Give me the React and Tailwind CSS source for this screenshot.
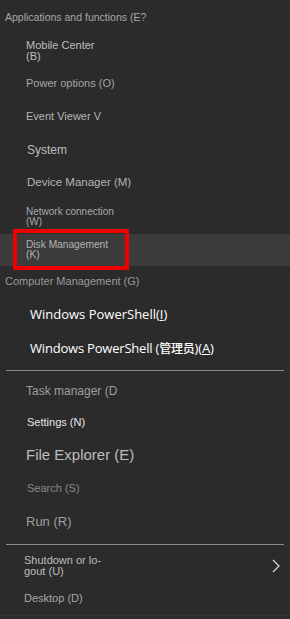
export default function App() {
  const sans = { fontFamily: '"Liberation Sans", Arial, sans-serif' };
  return (
    <div className="w-[290px] h-[619px] bg-[#2b2b2b] flex flex-col overflow-hidden" style={sans}>
      <div className="h-[35px] flex items-center pl-[5px] text-[10.5px] text-[#a8a8a8]">Applications and functions (E?</div>
      <div className="h-[32px] flex items-center pl-[26px]">
        <div className="text-[11px] leading-[11px] text-[#bdbdbd]">Mobile Center<br />(B)</div>
      </div>
      <div className="h-[33px] flex items-center pl-[26px] text-[11px] text-[#a6a6a6]">Power options (O)</div>
      <div className="h-[33px] flex items-center pl-[26px] text-[11px] text-[#b3b3b3]">Event Viewer V</div>
      <div className="h-[33px] flex items-center pl-[27px] text-[12px] text-[#bdbdbd]">System</div>
      <div className="h-[33px] flex items-center pl-[27px] text-[11.5px] text-[#b3b3b3]">Device Manager (M)</div>
      <div className="h-[35px] flex items-center pl-[26px]">
        <div className="text-[10px] leading-[10px] text-[#a8a8a8]">Network connection<br />(W)</div>
      </div>
      <div className="h-[32px] bg-[#3b3b3b] relative flex items-center pl-[26px]">
        <div className="text-[10.2px] leading-[10px] text-[#b3b3b3]">Disk Management<br />(K)</div>
        <div className="absolute left-[13px] top-[-5px] w-[116px] h-[41px] border-[4px] border-[#ee0000]"></div>
      </div>
      <div className="h-[31px] flex items-center pl-[5px] text-[11px] text-[#9a9a9a]">Computer Management (G)</div>
      <div className="h-[36px] flex items-center pl-[30px] text-[13px] text-white font-medium" style={{ fontFamily: '"Open Sans", "Noto Sans CJK SC", sans-serif' }}>
        Windows PowerShell(<span className="underline">I</span>)
      </div>
      <div className="h-[32px] flex items-center pl-[30px] text-[13px] text-white font-medium tracking-[-0.2px]" style={{ fontFamily: '"Open Sans", "Noto Sans CJK SC", sans-serif' }}>
        Windows PowerShell (<span className="text-[12px]">管理员</span>)(<span className="underline">A</span>)
      </div>
      <div className="h-[10px] flex items-center px-[6px]">
        <div className="h-px w-full bg-[#8a8a8a]"></div>
      </div>
      <div className="h-[31px] flex items-center pl-[26px] text-[12px] text-[#9e9e9e]">Task manager (D</div>
      <div className="h-[33px] flex items-center pl-[27px] text-[11px] text-[#e6e6e6]">Settings (N)</div>
      <div className="h-[33px] flex items-center pl-[26px] text-[15px] text-[#bdbdbd]">File Explorer (E)</div>
      <div className="h-[33px] flex items-center pl-[27px] text-[11px] text-[#8a8a8a]">Search (S)</div>
      <div className="h-[33px] flex items-center pl-[26px] text-[13px] text-[#9e9e9e]">Run (R)</div>
      <div className="h-[12px] flex items-center px-[6px]">
        <div className="h-px w-full bg-[#8a8a8a]"></div>
      </div>
      <div className="h-[31px] flex items-center justify-between pl-[24px] pr-[10px]">
        <div className="text-[11px] leading-[11px] text-[#bdbdbd]">Shutdown or lo-<br />gout (U)</div>
        <svg width="8" height="14" viewBox="0 0 8 14" fill="none">
          <path d="M1 1 L7 7 L1 13" stroke="#d8d8d8" strokeWidth="1.2" />
        </svg>
      </div>
      <div className="h-[34px] flex items-center pl-[24px] text-[11px] text-[#a8a8a8]">Desktop (D)</div>
      <div className="h-px bg-[#333333]"></div>
    </div>
  );
}
